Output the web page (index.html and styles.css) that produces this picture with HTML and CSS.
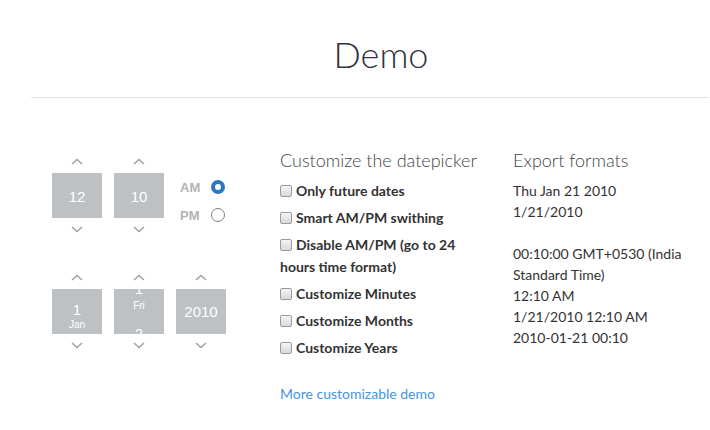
FILE: index.html
```html
<!DOCTYPE html>
<html>
<head>
<meta charset="utf-8">
<title>Demo</title>
<link rel="stylesheet" href="styles.css">
</head>
<body>
<div class="page">
  <h1 class="title">Demo</h1>
  <hr class="rule">
  <div class="columns">
    <div class="pickers">
      <div class="picker-row">
        <div class="spin">
          <button class="arrow arrow-up"><svg width="12" height="7" viewBox="0 0 12 7"><polyline points="1,6 6,1.5 11,6"/></svg></button>
          <div class="box"><div class="item"><span class="num">12</span></div></div>
          <button class="arrow arrow-down"><svg width="12" height="7" viewBox="0 0 12 7"><polyline points="1,1 6,5.5 11,1"/></svg></button>
        </div>
        <div class="spin">
          <button class="arrow arrow-up"><svg width="12" height="7" viewBox="0 0 12 7"><polyline points="1,6 6,1.5 11,6"/></svg></button>
          <div class="box"><div class="item"><span class="num">10</span></div></div>
          <button class="arrow arrow-down"><svg width="12" height="7" viewBox="0 0 12 7"><polyline points="1,1 6,5.5 11,1"/></svg></button>
        </div>
        <div class="ampm">
          <label class="ampm-opt"><span class="ampm-text">AM</span><input type="radio" name="ampm" checked></label>
          <label class="ampm-opt"><span class="ampm-text">PM</span><input type="radio" name="ampm"></label>
        </div>
      </div>
      <div class="picker-row picker-row-date">
        <div class="spin">
          <button class="arrow arrow-up"><svg width="12" height="7" viewBox="0 0 12 7"><polyline points="1,6 6,1.5 11,6"/></svg></button>
          <div class="box"><div class="item item-label"><span class="num">1</span><span class="sub">Jan</span></div></div>
          <button class="arrow arrow-down"><svg width="12" height="7" viewBox="0 0 12 7"><polyline points="1,1 6,5.5 11,1"/></svg></button>
        </div>
        <div class="spin">
          <button class="arrow arrow-up"><svg width="12" height="7" viewBox="0 0 12 7"><polyline points="1,6 6,1.5 11,6"/></svg></button>
          <div class="box">
            <div class="list list-day">
              <div class="item item-label"><span class="num">1</span><span class="sub sub-day">Fri</span></div>
              <div class="item item-label"><span class="num">2</span><span class="sub sub-day">Sat</span></div>
            </div>
          </div>
          <button class="arrow arrow-down"><svg width="12" height="7" viewBox="0 0 12 7"><polyline points="1,1 6,5.5 11,1"/></svg></button>
        </div>
        <div class="spin">
          <button class="arrow arrow-up"><svg width="12" height="7" viewBox="0 0 12 7"><polyline points="1,6 6,1.5 11,6"/></svg></button>
          <div class="box"><div class="item item-year"><span class="num">2010</span></div></div>
          <button class="arrow arrow-down"><svg width="12" height="7" viewBox="0 0 12 7"><polyline points="1,1 6,5.5 11,1"/></svg></button>
        </div>
      </div>
    </div>

    <div class="options">
      <h3 class="col-head">Customize the datepicker</h3>
      <label class="opt"><input type="checkbox">Only future dates</label>
      <label class="opt"><input type="checkbox">Smart AM/PM swithing</label>
      <label class="opt"><input type="checkbox">Disable AM/PM (go to 24 hours time format)</label>
      <label class="opt"><input type="checkbox">Customize Minutes</label>
      <label class="opt"><input type="checkbox">Customize Months</label>
      <label class="opt"><input type="checkbox">Customize Years</label>
      <a class="more" href="#">More customizable demo</a>
    </div>

    <div class="exports">
      <h3 class="col-head">Export formats</h3>
      <div class="fmt">Thu Jan 21 2010</div>
      <div class="fmt">1/21/2010</div>
      <div class="fmt fmt-gap"></div>
      <div class="fmt">00:10:00 GMT+0530 (India Standard Time)</div>
      <div class="fmt">12:10 AM</div>
      <div class="fmt">1/21/2010 12:10 AM</div>
      <div class="fmt">2010-01-21 00:10</div>
    </div>
  </div>
</div>
</body>
</html>
```

FILE: styles.css
```css
* { box-sizing: border-box; }

html, body {
  margin: 0;
  padding: 0;
  background: #ffffff;
}

body {
  font-family: Lato, "Open Sans", "Liberation Sans", sans-serif;
  color: #333333;
  overflow: hidden;
}

.page {
  width: 710px;
}

.title {
  margin: 34px 1px 0 31px;
  padding-left: 22px;
  text-align: center;
  font-family: Lato, sans-serif;
  font-weight: 300;
  font-size: 36px;
  line-height: 40px;
  color: #333340;
}

.rule {
  margin: 23px 1px 0 31px;
  border: 0;
  border-top: 1px solid #e4e4e4;
  height: 0;
}

.columns {
  display: flex;
  align-items: flex-start;
  margin-top: 52px;
}

/* ---------- pickers ---------- */
.pickers {
  width: 228px;
  margin-left: 52px;
  padding-top: 3px;
}

.picker-row {
  display: flex;
  align-items: flex-start;
  gap: 12px;
}

.picker-row-date {
  margin-top: 31px;
}

.spin {
  width: 50px;
  display: flex;
  flex-direction: column;
}

.arrow {
  display: flex;
  justify-content: center;
  width: 50px;
  height: 20px;
  padding: 0;
  margin: 0;
  border: 0;
  background: none;
  cursor: pointer;
}

.arrow-up {
  align-items: flex-end;
  padding-bottom: 8px;
}

.arrow-down {
  align-items: flex-start;
  padding-top: 8px;
}

.arrow svg polyline {
  fill: none;
  stroke: #9ca6a6;
  stroke-width: 1.6;
}

.box {
  width: 50px;
  height: 45px;
  background: #bdc1c4;
  overflow: hidden;
  color: #ffffff;
  font-family: "Liberation Sans", Arial, sans-serif;
}

.item {
  height: 45px;
  display: flex;
  flex-direction: column;
  align-items: center;
  padding-top: 16px;
}

.item-label {
  padding-top: 13px;
}

.item-year {
  padding-top: 15px;
}

.num {
  font-size: 15px;
  line-height: 16px;
}

.sub {
  font-size: 10px;
  line-height: 13px;
}

.sub-day {
  line-height: 17px;
}

.list-day {
  margin-top: -21px;
}

.ampm {
  display: flex;
  flex-direction: column;
  gap: 14px;
  margin-left: 4px;
  padding-top: 27px;
}

.ampm-opt {
  display: flex;
  align-items: center;
  height: 14px;
  gap: 10px;
  font-family: "Liberation Sans", Arial, sans-serif;
  font-weight: bold;
  font-size: 13px;
  color: #b3b3b3;
}

.ampm-text {
  width: 21px;
}

.ampm-opt input {
  appearance: none;
  -webkit-appearance: none;
  margin: 0;
  width: 14px;
  height: 14px;
  border-radius: 50%;
  border: 1px solid #7d7d7d;
  background: #ffffff;
}

.ampm-opt input:checked {
  border: 4px solid #2a79c0;
}

/* ---------- options ---------- */
.options {
  width: 233px;
  padding-right: 30px;
}

.col-head {
  margin: 0 0 10px;
  font-weight: 300;
  font-size: 18px;
  line-height: 20px;
  color: #444444;
}

.opt {
  display: block;
  font-weight: bold;
  font-size: 14px;
  line-height: 22px;
  margin-bottom: 5px;
  color: #333333;
}

.opt input {
  appearance: none;
  -webkit-appearance: none;
  width: 12px;
  height: 12px;
  margin: 0 4px 0 0;
  vertical-align: -1px;
  border: 1px solid #9a9a9a;
  border-radius: 2px;
  background: linear-gradient(#f4f4f4, #d9d9d9);
}

.more {
  display: block;
  margin-top: 24px;
  font-size: 14px;
  line-height: 22px;
  color: #4595db;
  text-decoration: none;
}

/* ---------- exports ---------- */
.exports {
  width: 190px;
}

.fmt {
  font-size: 14px;
  line-height: 21px;
  color: #333333;
}

.fmt-gap {
  height: 21px;
}
```
